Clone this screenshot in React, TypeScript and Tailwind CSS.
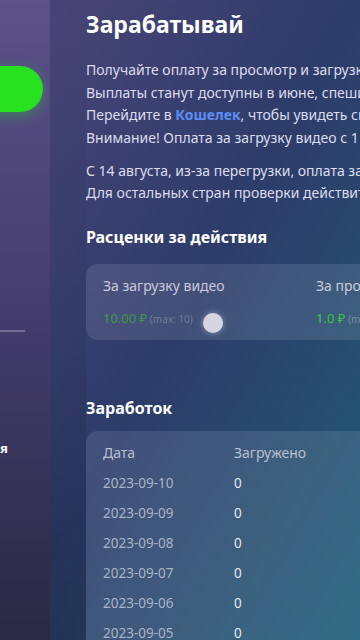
export default function App() {
    const rows = ['2023-09-10', '2023-09-09', '2023-09-08', '2023-09-07', '2023-09-06', '2023-09-05', '2023-09-04'];

    return (
        <div className="relative w-[360px] h-[640px] overflow-hidden flex bg-gradient-to-br from-[#4c4578] via-[#2d3c69] to-[#1a5c76] font-['Noto_Sans',sans-serif]">
            {/* Sidebar, scrolled mostly off screen */}
            <aside className="w-[50px] shrink-0 overflow-hidden bg-gradient-to-b from-[#5c5189] via-[#433c6c] to-[#2a2944]">
                <div className="w-[240px] -ml-[190px] flex flex-col">
                    <div className="h-[66px]"></div>
                    <div className="mr-[7px] h-[46px] rounded-r-full bg-[#27e21f] shadow-[0_4px_14px_rgba(40,230,40,0.35)]"></div>
                    <div className="h-[218px]"></div>
                    <div className="mr-[25px] h-[2px] bg-white/25"></div>
                    <div className="h-[106px]"></div>
                    <div className="flex justify-end pr-[42px] text-[13px] font-bold text-white leading-5">Информация</div>
                </div>
            </aside>

            {/* Dark band between sidebar and content */}
            <div className="w-[36px] shrink-0 bg-gradient-to-b from-black/0 via-black/5 to-black/20"></div>

            <main className="flex-1 min-w-0 pt-[9px]">
                <h1 className="text-[23px] font-bold text-white whitespace-nowrap leading-[30px]">Зарабатывай</h1>

                <div className="mt-[20px] text-[14px] leading-[22.7px] text-[#dcdcee] whitespace-nowrap">
                    <p>Получайте оплату за просмотр и загрузку видео</p>
                    <p>Выплаты станут доступны в июне, спешите заработать</p>
                    <p>Перейдите в <span className="font-bold text-[#5a8ef2]">Кошелек</span>, чтобы увидеть свой баланс</p>
                    <p>Внимание! Оплата за загрузку видео с 1 сентября</p>
                </div>

                <div className="mt-[10px] text-[14px] leading-[22.5px] text-[#dcdcee] whitespace-nowrap">
                    <p>С 14 августа, из-за перегрузки, оплата за просмотр</p>
                    <p>Для остальных стран проверки действительны</p>
                </div>

                <h2 className="mt-[20px] text-[16px] font-bold text-white whitespace-nowrap leading-6">Расценки за действия</h2>

                <div className="mt-[15px] w-[320px] h-[76px] rounded-[12px] bg-white/10 flex px-[17px] pt-[12px]">
                    <div className="w-[213px] shrink-0">
                        <p className="text-[14px] text-[#c9c9dc] whitespace-nowrap leading-5">За загрузку видео</p>
                        <p className="mt-[11px] whitespace-nowrap leading-5">
                            <span className="text-[13px] text-[#3a9b4c]">10.00 ₽</span>
                            <span className="text-[10px] text-white/25"> (max: 10)</span>
                        </p>
                    </div>
                    <div>
                        <p className="text-[14px] text-[#c9c9dc] whitespace-nowrap leading-5">За просмотр</p>
                        <p className="mt-[11px] whitespace-nowrap leading-5">
                            <span className="text-[13px] text-[#36c84a]">1.0 ₽</span>
                            <span className="text-[10px] text-white/30"> (max: 100)</span>
                        </p>
                    </div>
                </div>

                <h2 className="mt-[56px] text-[16px] font-bold text-white whitespace-nowrap leading-6">Заработок</h2>

                <div className="mt-[11px] w-[320px] rounded-t-[12px] bg-white/10 px-[17px] pt-[7px] pb-4">
                    <div className="flex text-[14px] text-[#b9bfd3] leading-[30px]">
                        <span className="w-[131px]">Дата</span>
                        <span>Загружено</span>
                    </div>
                    {rows.map((d) => (
                        <div key={d} className="flex text-[13.5px] leading-[30px]">
                            <span className="w-[131px] text-[#a9b4c9]">{d}</span>
                            <span className="text-[#e3e9f2]">0</span>
                        </div>
                    ))}
                </div>
            </main>

            {/* touch indicator */}
            <div className="absolute left-[203px] top-[313px] w-[20px] h-[20px] rounded-full bg-[#d6d6e2] shadow-[0_0_6px_rgba(255,255,255,0.4)]"></div>
        </div>
    );
}
